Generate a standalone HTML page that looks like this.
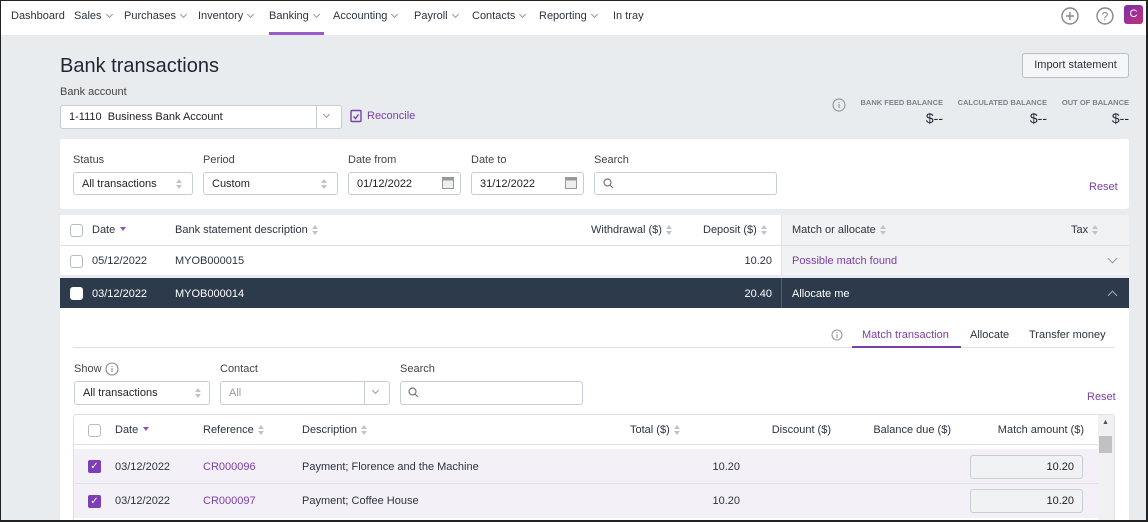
<!DOCTYPE html>
<html><head><meta charset="utf-8"><style>
*{box-sizing:border-box;margin:0;padding:0}
body{width:1148px;height:522px;overflow:hidden;background:#e9ecef;font-family:"Liberation Sans",sans-serif;font-size:11px;color:#1f2733;position:relative}
.a{position:absolute;white-space:nowrap}
.frame{position:absolute;left:0;top:0;width:1148px;height:522px;border:1px solid #222;border-right-width:2px;border-bottom-width:2px;pointer-events:none;z-index:10}
.nav{position:absolute;left:0;top:0;width:1148px;height:35px;background:#fff}
.nav span{position:absolute;top:10px;font-size:11px;color:#2b3440}
.cv{display:inline-block;width:5px;height:5px;border-right:1px solid #999;border-bottom:1px solid #999;transform:rotate(45deg);margin:0 0 3px 5px;vertical-align:middle}
.inp{position:absolute;background:#fff;border:1px solid #c8cdd3;border-radius:3px;height:23px;font-size:11px;padding:5px 8px;color:#222}
.lbl{position:absolute;font-size:11px;color:#444}
.sort{display:inline-block;vertical-align:middle;margin-left:4px;width:7px;height:10px;position:relative}
.sort:before{content:"";position:absolute;left:0;top:0;border:3.5px solid transparent;border-bottom:4px solid #c0c4c9;border-top:0}
.sort:after{content:"";position:absolute;left:0;top:6px;border:3.5px solid transparent;border-top:4px solid #c0c4c9;border-bottom:0}
.sa{position:absolute!important;margin:0}
.pur{color:#7a3fa8}
.cb{position:absolute;width:13px;height:13px;border:1px solid #b5bcc4;border-radius:3px;background:#fff}
.cbp{position:absolute;width:13px;height:13px;border-radius:2px;background:#7e3fb6;color:#fff;font-size:10px;line-height:13px;text-align:center}
.hd{position:absolute;font-size:11px;color:#2b3440}
.r{text-align:right}
.upd{display:inline-block;width:0;height:0;border:3px solid transparent;border-top:4px solid #8e55c0;margin-left:5px;vertical-align:middle}
</style></head><body>
<div class="nav">
<span style="left:11px">Dashboard</span>
<span style="left:74px">Sales<i class="cv"></i></span>
<span style="left:124px">Purchases<i class="cv"></i></span>
<span style="left:198px">Inventory<i class="cv"></i></span>
<span style="left:269px">Banking<i class="cv"></i></span>
<span style="left:333px">Accounting<i class="cv"></i></span>
<span style="left:414px">Payroll<i class="cv"></i></span>
<span style="left:472px">Contacts<i class="cv"></i></span>
<span style="left:539px">Reporting<i class="cv"></i></span>
<span style="left:613px">In tray</span>
<div class="a" style="left:269px;top:32px;width:55px;height:3px;background:#9b59c9"></div>
<svg class="a" style="left:1060px;top:6px" width="20" height="20"><circle cx="10" cy="10" r="8" fill="none" stroke="#888" stroke-width="1.4"/><path d="M10 6v8M6 10h8" stroke="#888" stroke-width="1.4"/></svg>
<svg class="a" style="left:1095px;top:6px" width="20" height="20"><circle cx="10" cy="10" r="8" fill="none" stroke="#888" stroke-width="1.4"/><text x="10" y="14.5" font-size="12" fill="#888" text-anchor="middle" font-family="Liberation Sans">?</text></svg>
<div class="a" style="left:1124px;top:5px;width:19px;height:19px;border-radius:3px;background:linear-gradient(135deg,#7b2fa8,#c1307e);color:#fff;font-size:11px;text-align:center;line-height:19px">C</div>
</div>

<div class="a" style="left:60px;top:55px;font-size:20px;color:#1f2733">Bank transactions</div>
<div class="lbl" style="left:60px;top:86px">Bank account</div>
<div class="inp" style="left:60px;top:105px;width:282px;height:24px">1-1110&nbsp; Business Bank Account</div>
<div class="a" style="left:316px;top:106px;width:1px;height:22px;background:#c8cdd3"></div>
<i class="a cv" style="left:324px;top:112px;margin:0"></i>
<svg class="a" style="left:350px;top:109px" width="12" height="14"><rect x="1" y="1.5" width="10" height="11" rx="1" fill="none" stroke="#7a3fa8" stroke-width="1.4"/><path d="M3.5 7.5l2 2 3-4" stroke="#7a3fa8" stroke-width="1.4" fill="none"/></svg>
<div class="a pur" style="left:367px;top:110px">Reconcile</div>

<div class="a" style="left:1022px;top:53px;width:107px;height:25px;background:#f5f6f7;border:1px solid #b9bec4;border-radius:3px;font-size:11px;text-align:center;line-height:23px;color:#2b3440">Import statement</div>
<svg class="a" style="left:832px;top:98px" width="14" height="14"><circle cx="7" cy="7" r="6" fill="none" stroke="#999" stroke-width="1.2"/><path d="M7 6v4M7 4v1" stroke="#999" stroke-width="1.2"/></svg>
<div class="a" style="left:853px;top:98px;font-size:7.5px;font-weight:bold;color:#7a828c;width:90px;text-align:right">BANK FEED BALANCE</div>
<div class="a" style="left:950px;top:98px;font-size:7.5px;font-weight:bold;color:#7a828c;width:97px;text-align:right">CALCULATED BALANCE</div>
<div class="a" style="left:1054px;top:98px;font-size:7.5px;font-weight:bold;color:#7a828c;width:75px;text-align:right">OUT OF BALANCE</div>
<div class="a r" style="left:900px;width:43px;top:110px;font-size:14px">$--</div>
<div class="a r" style="left:1000px;width:47px;top:110px;font-size:14px">$--</div>
<div class="a r" style="left:1080px;width:49px;top:110px;font-size:14px">$--</div>

<!-- filters -->
<div class="a" style="left:60px;top:139px;width:1069px;height:70px;background:#fff;border-radius:3px"></div>
<div class="lbl" style="left:73px;top:154px">Status</div>
<div class="lbl" style="left:203px;top:154px">Period</div>
<div class="lbl" style="left:348px;top:154px">Date from</div>
<div class="lbl" style="left:471px;top:154px">Date to</div>
<div class="lbl" style="left:594px;top:154px">Search</div>
<div class="inp" style="left:73px;top:172px;width:120px">All transactions</div><span class="sort sa" style="left:176px;top:179px"></span>
<div class="inp" style="left:203px;top:172px;width:135px">Custom</div><span class="sort sa" style="left:321px;top:179px"></span>
<div class="inp" style="left:348px;top:172px;width:113px">01/12/2022</div>
<div class="inp" style="left:471px;top:172px;width:113px">31/12/2022</div>
<svg class="a" style="left:442px;top:177px" width="12" height="12"><rect x="0.5" y="0.5" width="11" height="11" fill="#eee" stroke="#999"/><rect x="0.5" y="0.5" width="11" height="3" fill="#999"/></svg>
<svg class="a" style="left:565px;top:177px" width="12" height="12"><rect x="0.5" y="0.5" width="11" height="11" fill="#eee" stroke="#999"/><rect x="0.5" y="0.5" width="11" height="3" fill="#999"/></svg>
<div class="inp" style="left:594px;top:172px;width:183px"></div>
<svg class="a" style="left:603px;top:178px" width="11" height="11"><circle cx="4.5" cy="4.5" r="3.5" fill="none" stroke="#777" stroke-width="1.2"/><path d="M7 7l3 3" stroke="#777" stroke-width="1.2"/></svg>
<div class="a pur" style="left:1089px;top:181px">Reset</div>

<!-- table -->
<div class="a" style="left:60px;top:215px;width:1069px;height:307px;background:#fff"></div>
<div class="a" style="left:781px;top:215px;width:348px;height:61px;background:#f1f2f4;border-left:1px solid #dde0e4"></div>
<div class="a" style="left:60px;top:245px;width:1069px;height:1px;background:#dde0e4"></div>
<div class="a" style="left:60px;top:275px;width:1069px;height:3px;background:#e9ecef"></div>
<div class="cb" style="left:70px;top:224px"></div>
<div class="hd" style="left:92px;top:224px">Date<i class="upd"></i></div>
<div class="hd" style="left:175px;top:224px">Bank statement description<span class="sort"></span></div>
<div class="hd" style="left:591px;top:224px">Withdrawal ($)<span class="sort"></span></div>
<div class="hd" style="left:703px;top:224px">Deposit ($)<span class="sort"></span></div>
<div class="hd" style="left:792px;top:224px">Match or allocate<span class="sort"></span></div>
<div class="hd" style="left:1071px;top:224px">Tax<span class="sort"></span></div>
<div class="cb" style="left:70px;top:255px"></div>
<div class="hd" style="left:92px;top:255px">05/12/2022</div>
<div class="hd" style="left:175px;top:255px">MYOB000015</div>
<div class="hd r" style="left:700px;width:72px;top:255px">10.20</div>
<div class="a pur" style="left:792px;top:255px">Possible match found</div>
<i class="a cv" style="left:1109px;top:255px;margin:0;width:7px;height:7px"></i>

<div class="a" style="left:60px;top:278px;width:1069px;height:30px;background:#2d3a4b"></div>
<div class="a" style="left:781px;top:278px;width:1px;height:30px;background:#56606d"></div>
<div class="a" style="left:70px;top:287px;width:13px;height:13px;background:#fff;border-radius:3px"></div>
<div class="a" style="left:92px;top:288px;color:#fff">03/12/2022</div>
<div class="a" style="left:175px;top:288px;color:#fff">MYOB000014</div>
<div class="a r" style="left:700px;width:72px;top:288px;color:#fff">20.40</div>
<div class="a" style="left:792px;top:288px;color:#fff">Allocate me</div>
<i class="a cv" style="left:1109px;top:292px;margin:0;width:7px;height:7px;transform:rotate(225deg);border-color:#aab"></i>

<!-- expanded -->
<div class="a" style="left:73px;top:347px;width:1042px;height:1px;background:#dde0e4"></div>
<svg class="a" style="left:831px;top:329px" width="12" height="12"><circle cx="6" cy="6" r="5" fill="none" stroke="#999" stroke-width="1.1"/><path d="M6 5v4M6 3v1" stroke="#999" stroke-width="1.1"/></svg>
<div class="a pur" style="left:862px;top:329px">Match transaction</div>
<div class="a" style="left:852px;top:346px;width:109px;height:2px;background:#7a3fa8"></div>
<div class="hd" style="left:970px;top:329px">Allocate</div>
<div class="hd" style="left:1029px;top:329px">Transfer money</div>

<div class="lbl" style="left:74px;top:363px">Show</div>
<svg class="a" style="left:105px;top:362px" width="14" height="14"><circle cx="7" cy="7" r="6" fill="none" stroke="#888" stroke-width="1.1"/><path d="M7 6v4M7 4v1" stroke="#888" stroke-width="1.1"/></svg>
<div class="lbl" style="left:220px;top:363px">Contact</div>
<div class="lbl" style="left:400px;top:363px">Search</div>
<div class="inp" style="left:74px;top:381px;width:136px;height:24px">All transactions</div><span class="sort sa" style="left:195px;top:388px"></span>
<div class="inp" style="left:220px;top:381px;width:170px;height:24px;color:#999">All</div>
<div class="a" style="left:364px;top:382px;width:1px;height:22px;background:#c8cdd3"></div><i class="a cv" style="left:373px;top:388px;margin:0"></i>
<div class="inp" style="left:400px;top:381px;width:183px;height:24px"></div>
<svg class="a" style="left:408px;top:387px" width="11" height="11"><circle cx="4.5" cy="4.5" r="3.5" fill="none" stroke="#777" stroke-width="1.2"/><path d="M7 7l3 3" stroke="#777" stroke-width="1.2"/></svg>
<div class="a pur" style="left:1087px;top:391px">Reset</div>

<div class="a" style="left:73px;top:414px;width:1042px;height:108px;border:1px solid #dde0e4;border-radius:3px"></div>
<div class="a" style="left:74px;top:444px;width:1024px;height:1px;background:#dde0e4"></div>
<div class="a" style="left:74px;top:449px;width:1024px;height:34px;background:#f4f0f8"></div>
<div class="a" style="left:74px;top:483px;width:1024px;height:1px;background:#e4e0ea"></div>
<div class="a" style="left:74px;top:484px;width:1024px;height:34px;background:#f4f0f8"></div>
<div class="a" style="left:1098px;top:415px;width:16px;height:107px;background:#f1f1f1"></div>
<div class="a" style="left:1099px;top:436px;width:13px;height:17px;background:#c1c1c1"></div>
<div class="a" style="left:1102px;top:419px;font-size:7px;color:#505050">▲</div>
<div class="cb" style="left:88px;top:424px"></div>
<div class="hd" style="left:115px;top:424px">Date<i class="upd"></i></div>
<div class="hd" style="left:203px;top:424px">Reference<span class="sort"></span></div>
<div class="hd" style="left:302px;top:424px">Description<span class="sort"></span></div>
<div class="hd" style="left:630px;top:424px">Total ($)<span class="sort"></span></div>
<div class="hd r" style="left:740px;width:91px;top:424px">Discount ($)</div>
<div class="hd r" style="left:850px;width:101px;top:424px">Balance due ($)</div>
<div class="hd r" style="left:970px;width:114px;top:424px">Match amount ($)</div>

<div class="cbp" style="left:88px;top:460px">✓</div>
<div class="hd" style="left:115px;top:461px">03/12/2022</div>
<div class="a pur" style="left:203px;top:461px">CR000096</div>
<div class="hd" style="left:302px;top:461px">Payment; Florence and the Machine</div>
<div class="hd r" style="left:680px;width:60px;top:461px">10.20</div>
<div class="inp r" style="left:970px;top:455px;width:113px;height:24px;background:#f1f2f4">10.20</div>

<div class="cbp" style="left:88px;top:495px">✓</div>
<div class="hd" style="left:115px;top:495px">03/12/2022</div>
<div class="a pur" style="left:203px;top:495px">CR000097</div>
<div class="hd" style="left:302px;top:495px">Payment; Coffee House</div>
<div class="hd r" style="left:680px;width:60px;top:495px">10.20</div>
<div class="inp r" style="left:970px;top:489px;width:113px;height:24px;background:#f1f2f4">10.20</div>

<div class="frame"></div>
</body></html>
